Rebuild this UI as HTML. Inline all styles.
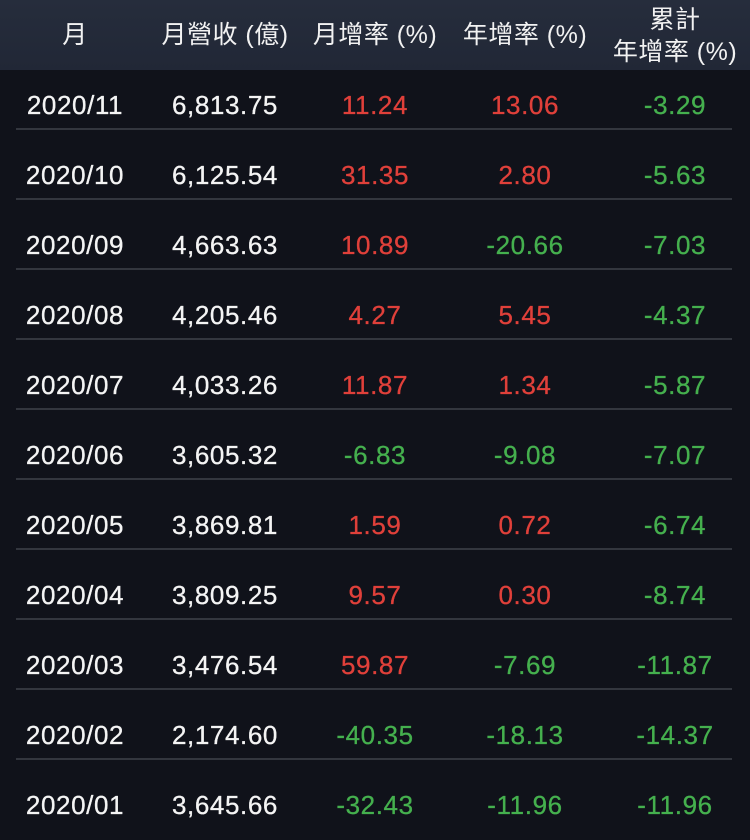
<!DOCTYPE html>
<html><head><meta charset="utf-8"><style>
html,body{margin:0;padding:0;background:#10121a;width:750px;height:832px;overflow:hidden;font-family:"Liberation Sans","Noto Sans CJK TC",sans-serif;}
.hdr{position:absolute;left:0;top:0;width:750px;height:70px;background:linear-gradient(#262d3c,#212736);}
.h{position:absolute;width:150px;text-align:center;color:#f2f2f2;font-size:25px;line-height:30px;letter-spacing:0.5px;}
.row{position:absolute;left:0;width:750px;height:70px;}
.c{position:absolute;width:150px;text-align:center;font-size:26px;line-height:30px;top:20px;color:#f4f4f4;letter-spacing:0.6px;-webkit-text-stroke:0.3px currentColor;}
.line{position:absolute;left:16px;width:716px;height:2px;background:#33363e;}
.r{color:#e0403a}.g{color:#45b04e}
</style></head><body>
<div class="hdr">
<div class="h" style="left:0;top:20px">月</div>
<div class="h" style="left:150px;top:20px">月營收 (億)</div>
<div class="h" style="left:300px;top:20px">月增率 (%)</div>
<div class="h" style="left:450px;top:20px">年增率 (%)</div>
<div class="h" style="left:600px;top:5px">累計</div>
<div class="h" style="left:600px;top:37px">年增率 (%)</div>
</div>
<div id="t"></div>
<script>
var d=[["2020/11","6,813.75","11.24","13.06","-3.29"],["2020/10","6,125.54","31.35","2.80","-5.63"],["2020/09","4,663.63","10.89","-20.66","-7.03"],["2020/08","4,205.46","4.27","5.45","-4.37"],["2020/07","4,033.26","11.87","1.34","-5.87"],["2020/06","3,605.32","-6.83","-9.08","-7.07"],["2020/05","3,869.81","1.59","0.72","-6.74"],["2020/04","3,809.25","9.57","0.30","-8.74"],["2020/03","3,476.54","59.87","-7.69","-11.87"],["2020/02","2,174.60","-40.35","-18.13","-14.37"],["2020/01","3,645.66","-32.43","-11.96","-11.96"]];
var h="";
d.forEach(function(r,i){var y=70+i*70;h+='<div class="row" style="top:'+y+'px">';
r.forEach(function(v,j){var cl=j<2?"":(v[0]=="-"?"g":"r");h+='<div class="c '+cl+'" style="left:'+(j*150)+'px">'+v+'</div>';});
h+='</div>';if(i<10)h+='<div class="line" style="top:'+(y+58)+'px"></div>';});
document.getElementById("t").innerHTML=h;
</script>
</body></html>
